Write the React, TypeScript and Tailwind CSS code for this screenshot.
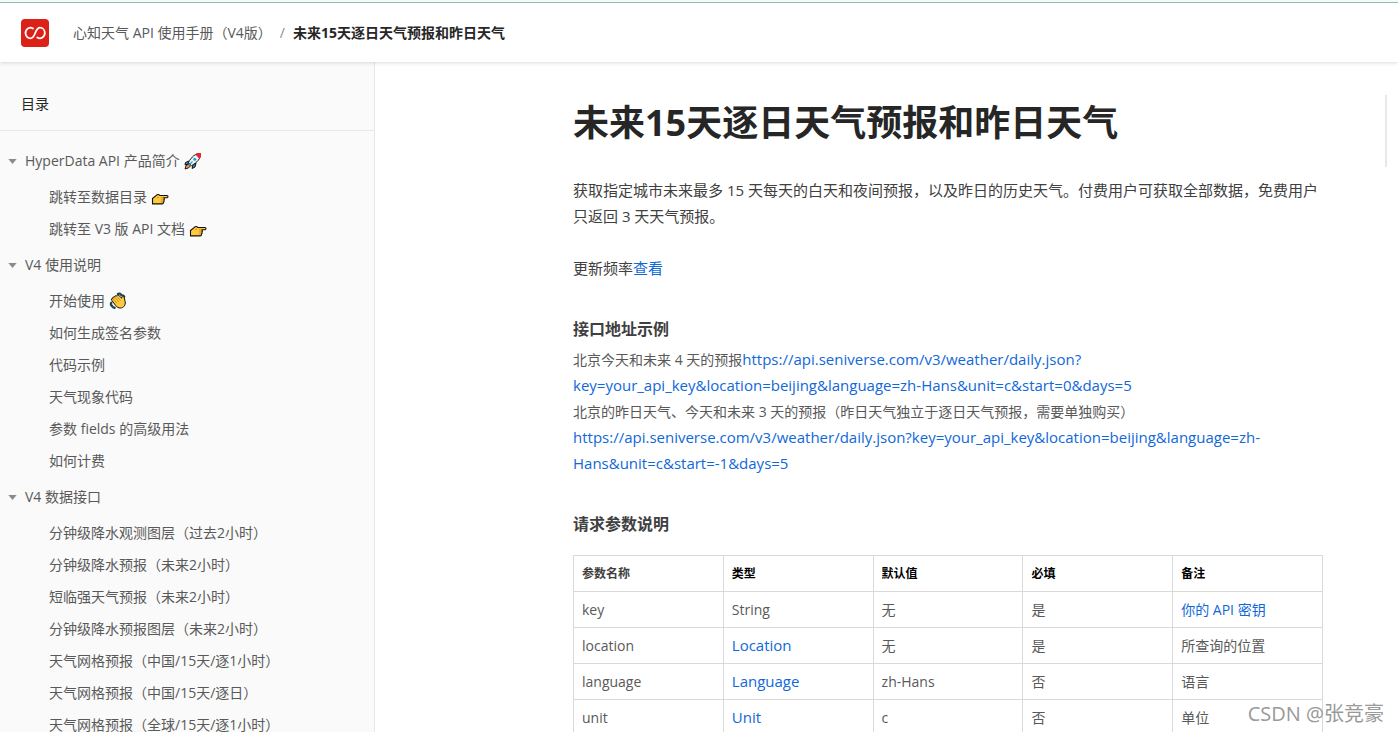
import React from "react";

type TocGroup = {
  title: string;
  icon?: React.ReactNode;
  items: { title: string; icon?: React.ReactNode }[];
};

const Rocket = () => (
  <svg viewBox="0 0 18 18" className="size-[18px] shrink-0" aria-hidden="true">
    <path d="M5 9 1.5 10.5 1 13l3-1zM9 13l-1 3.5 3-1.5 1-4z" fill="#19a5d8" stroke="#111" strokeWidth="1" />
    <path d="M4.5 12 2 13.5 1 17l3.5-1L6.5 14z" fill="#f7894a" stroke="#111" strokeWidth=".9" />
    <path d="M16.5 1.5C11 1.5 8 4.5 4.3 10.5l3.2 3.2c6-3.7 9-6.7 9-12.2z" fill="#f1f5f8" stroke="#111" strokeWidth="1" />
    <path d="M17 1c-2.5-.2-4.3.3-6 1.3l4.7 4.7c1-1.7 1.5-3.5 1.3-6z" fill="#e32636" />
    <circle cx="10.8" cy="7.2" r="1.5" fill="#19a5d8" />
    <path d="m5.5 12.5 3-3" stroke="#19a5d8" strokeWidth="1.2" />
  </svg>
);

const PointRight = () => (
  <svg viewBox="0 0 18 18" className="mt-1 size-[18px] shrink-0" aria-hidden="true">
    <path
      d="M1.5 8.5 6 4.8c.8-.6 2.2-.5 2.8.7H16c1.3 0 1.3 2.2 0 2.2h-3.3c1 .6.8 1.8 0 2.2.8.7.5 1.8-.3 2.1.3 1-.2 1.900-1.2 1.900H1.5z"
      fill="#ffc83d"
      stroke="#111"
      strokeWidth="1.1"
      strokeLinejoin="round"
    />
    <path d="M12.5 7.7H9.8M12 9.9H9.8M12 12H9.8M6 8l2-1" stroke="#b97a12" strokeWidth=".7" fill="none" />
  </svg>
);

const Wave = () => (
  <svg viewBox="0 0 18 18" className="size-[18px] shrink-0" aria-hidden="true">
    <path
      d="M9 2c1-.8 2.500-.3 3 .8M14 3.500c.6.3.9.7 1.100 1.200M2.300 10.800c-.6 1.200-.2 2.600.9 3.400M4.300 15.300c.4.3.8.5 1.300.5"
      stroke="#1d4650"
      strokeWidth="2.4"
      strokeLinecap="round"
      fill="none"
    />
    <path
      d="M2.600 8C2 6.900 3 5.900 4 6.500 3.500 5.200 4.700 4.300 5.700 5 5.700 3.600 7.200 3.200 8 4.200 8.600 3.200 9.900 3.200 10.600 4.200l2 1.900.3-1.300c.3-1.200 1.800-1.200 2.100 0l1.200 5c.6 3.300-1.700 6.200-4.900 6.200-1.800 0-3.200-.8-4.400-2.200z"
      fill="#ffc83d"
      stroke="#111"
      strokeWidth="1"
      strokeLinejoin="round"
    />
    <path d="m4.200 6.900 3.800 4.400M5.900 5.300l3.800 4.500M8.200 4.700l3.200 3.700" stroke="#b97a12" strokeWidth=".7" />
  </svg>
);

const groups: TocGroup[] = [
  {
    title: "HyperData API 产品简介",
    icon: <Rocket />,
    items: [
      { title: "跳转至数据目录", icon: <PointRight /> },
      { title: "跳转至 V3 版 API 文档", icon: <PointRight /> },
    ],
  },
  {
    title: "V4 使用说明",
    items: [
      { title: "开始使用", icon: <Wave /> },
      { title: "如何生成签名参数" },
      { title: "代码示例" },
      { title: "天气现象代码" },
      { title: "参数 fields 的高级用法" },
      { title: "如何计费" },
    ],
  },
  {
    title: "V4 数据接口",
    items: [
      { title: "分钟级降水观测图层（过去2小时）" },
      { title: "分钟级降水预报（未来2小时）" },
      { title: "短临强天气预报（未来2小时）" },
      { title: "分钟级降水预报图层（未来2小时）" },
      { title: "天气网格预报（中国/15天/逐1小时）" },
      { title: "天气网格预报（中国/15天/逐日）" },
      { title: "天气网格预报（全球/15天/逐1小时）" },
    ],
  },
];

const rows = [
  { name: "key", type: "String", def: "无", required: "是", note: "你的 API 密钥", noteLink: true },
  { name: "location", type: "Location", typeLink: true, def: "无", required: "是", note: "所查询的位置" },
  { name: "language", type: "Language", typeLink: true, def: "zh-Hans", required: "否", note: "语言" },
  { name: "unit", type: "Unit", typeLink: true, def: "c", required: "否", note: "单位" },
];

const Header = () => (
  <header className="relative z-10 shrink-0 border-t-2 border-[#effcfa] bg-white shadow-[0_1px_4px_rgba(0,0,0,0.14)]">
    <div className="flex h-[60px] items-center border-t border-[#9fb5b3] px-[21px] text-sm">
      <a href="#home" aria-label="心知天气" className="flex size-7 items-center justify-center rounded bg-[#dc2118]">
        <svg viewBox="0 0 28 28" className="size-7" fill="none" stroke="#fff" strokeWidth="1.8" strokeLinecap="round">
          <path d="M12 9.6C8.5 7.3 4.5 10 4.5 14c0 3 2.3 5.3 5 5.3 5.3 0 4.2-10.6 9.5-10.6 2.7 0 4.8 2.4 4.8 5.3 0 4-4 6.7-7.5 4.4" />
        </svg>
      </a>
      <nav className="ml-6 flex items-center">
        <a href="#book" className="text-[#595959]">心知天气 API 使用手册（V4版）</a>
        <span className="mx-2 text-[#8c8c8c]">/</span>
        <a href="#doc" className="font-bold text-[#262626]">未来15天逐日天气预报和昨日天气</a>
      </nav>
    </div>
  </header>
);

const Sidebar = () => (
  <aside className="w-[375px] shrink-0 overflow-hidden border-r border-[#e8e8e8] bg-[#fafafa] text-sm text-[#595959]">
    <h2 className="border-b border-[#e8e8e8] px-[21px] pt-[30px] pb-3.5 leading-6 text-[#262626]">目录</h2>
    <ul className="pt-2.5">
      {groups.map((group) => (
        <li key={group.title}>
          <a href="#group" className="flex h-10 items-center pl-2">
            <svg viewBox="0 0 10 6" className="mr-2 h-[5px] w-[9px]" aria-hidden="true">
              <path d="M0 0h10L5 6z" fill="#8c8c8c" />
            </svg>
            <span className="mr-1">{group.title}</span>
            {group.icon}
          </a>
          <ul>
            {group.items.map((item) => (
              <li key={item.title}>
                <a href="#item" className="flex h-8 items-center pl-[49px]">
                  <span className="mr-1">{item.title}</span>
                  {item.icon}
                </a>
              </li>
            ))}
          </ul>
        </li>
      ))}
    </ul>
  </aside>
);

const ParamTable = () => (
  <table className="mt-[18px] w-full table-fixed border-collapse text-sm text-[#595959]">
    <thead>
      <tr className="h-9 text-left text-xs text-black">
        <th className="border border-[#d9d9d9] px-2 text-[#404040]">参数名称</th>
        <th className="border border-[#d9d9d9] px-2">类型</th>
        <th className="border border-[#d9d9d9] px-2">默认值</th>
        <th className="border border-[#d9d9d9] px-2">必填</th>
        <th className="border border-[#d9d9d9] px-2">备注</th>
      </tr>
    </thead>
    <tbody>
      {rows.map((row) => (
        <tr key={row.name} className="h-9">
          <td className="border border-[#d9d9d9] px-2">{row.name}</td>
          <td className="border border-[#d9d9d9] px-2">
            {row.typeLink ? <a href="#type" className="text-[15px] text-[#1068d9]">{row.type}</a> : row.type}
          </td>
          <td className="border border-[#d9d9d9] px-2">{row.def}</td>
          <td className="border border-[#d9d9d9] px-2">{row.required}</td>
          <td className="border border-[#d9d9d9] px-2">
            {row.noteLink ? <a href="#key" className="text-[#1068d9]">{row.note}</a> : row.note}
          </td>
        </tr>
      ))}
    </tbody>
  </table>
);

const Article = () => (
  <article className="w-full max-w-[750px] pt-0.5 text-[15px] leading-[26px] text-[#404040]">
    <h1 className="text-4xl leading-[52px] font-bold text-[#262626]">未来15天逐日天气预报和昨日天气</h1>
    <p className="mt-7">
      获取指定城市未来最多 15 天每天的白天和夜间预报，以及昨日的历史天气。付费用户可获取全部数据，免费用户只返回 3 天天气预报。
    </p>
    <p className="mt-[26px]">
      更新频率<a href="#frequency" className="text-[#1068d9]">查看</a>
    </p>
    <h4 className="mt-[35px] text-base leading-[26px] font-bold">接口地址示例</h4>
    <p className="mt-1">
      <span className="text-sm leading-5 text-[#595959]">北京今天和未来 4 天的预报</span>
      <a href="#daily" className="text-[#1068d9]">
        https://api.seniverse.com/v3/weather/daily.json?<wbr />
        key=your_api_key&amp;location=beijing&amp;language=zh-Hans&amp;unit=c&amp;start=0&amp;days=5
      </a>
    </p>
    <p>
      <span className="text-sm leading-5 text-[#595959]">
        北京的昨日天气、今天和未来 3 天的预报（昨日天气独立于逐日天气预报，需要单独购买）
      </span>
      <br />
      <a href="#history" className="text-[#1068d9]">
        https://api.seniverse.com/v3/weather/daily.json?key=your_api_key&amp;location=beijing&amp;language=zh-Hans&amp;unit=c&amp;start=-1&amp;days=5
      </a>
    </p>
    <h4 className="mt-[35px] text-base leading-[26px] font-bold">请求参数说明</h4>
    <ParamTable />
  </article>
);

export default function App() {
  return (
    <div className="relative flex h-screen flex-col overflow-hidden bg-white font-['Open_Sans','Noto_Sans_CJK_SC',sans-serif]">
      <Header />
      <div className="flex min-h-0 flex-1">
        <Sidebar />
        <main className="flex min-w-0 flex-1 justify-end overflow-hidden pt-[33px] pr-[11px] pl-6">
          <Article />
          <div className="ml-[62px] h-[72px] w-0.5 shrink-0 bg-[#e8e8e8]" />
        </main>
      </div>
      <div className="absolute right-3.5 bottom-1 text-xl text-[#999]">CSDN @张竞豪</div>
    </div>
  );
}
